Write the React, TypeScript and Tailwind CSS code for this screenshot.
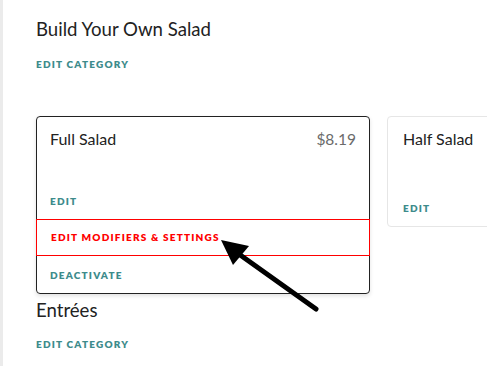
export default function App() {
  const font = { fontFamily: "Lato, 'Noto Sans', sans-serif" };
  return (
    <div className="relative flex h-[366px] w-[487px] overflow-hidden bg-white" style={font}>
      {/* left gutter */}
      <div className="h-full w-[3px] shrink-0 bg-[#ebebeb]" />

      <div className="flex flex-1 flex-col pl-[33px] pt-[17px]">
        <h2 className="text-[18.6px] leading-[24px] text-[#222]">Build Your Own Salad</h2>
        <a className="mt-[17px] text-[10px] font-extrabold leading-[12px] tracking-[1.2px] text-[#3d8b8b]">
          EDIT CATEGORY
        </a>

        <div className="mt-[46px] flex items-start gap-[17px]">
          {/* Full salad */}
          <div className="flex h-[178px] w-[334px] shrink-0 flex-col rounded-[4px] border border-[#222] shadow-[0_2px_4px_rgba(0,0,0,0.12)]">
            <div className="flex h-[65px] items-start justify-between px-[13px] pt-[12px]">
              <span className="text-[16px] leading-[20px] text-[#222]">Full Salad</span>
              <span className="text-[15.5px] leading-[20px] text-[#6b6b6b]">$8.19</span>
            </div>
            <div className="flex h-[37px] items-center px-[13px] pt-[2px]">
              <span className="text-[10px] font-extrabold tracking-[1.2px] text-[#3d8b8b]">EDIT</span>
            </div>
            <div className="-mx-px flex h-[37px] items-center border border-[#f00] px-[14px]">
              <span className="text-[10px] font-extrabold tracking-[1.2px] text-[#f00]">
                EDIT MODIFIERS &amp; SETTINGS
              </span>
            </div>
            <div className="flex flex-1 items-center px-[13px] pt-[2px]">
              <span className="text-[10px] font-extrabold tracking-[1.2px] text-[#3d8b8b]">DEACTIVATE</span>
            </div>
          </div>

          {/* Half salad */}
          <div className="flex h-[111px] w-[140px] shrink-0 flex-col rounded-[4px] border border-[#e6e6e6]">
            <div className="flex h-[73px] items-start px-[15px] pt-[12px]">
              <span className="text-[16px] leading-[20px] text-[#222]">Half Salad</span>
            </div>
            <div className="flex flex-1 items-center px-[15px]">
              <span className="text-[10px] font-extrabold tracking-[1.2px] text-[#3d8b8b]">EDIT</span>
            </div>
          </div>
        </div>

        <h2 className="mt-[4px] text-[18.6px] leading-[24px] text-[#222]">Entrées</h2>
        <a className="mt-[16px] text-[10px] font-extrabold leading-[12px] tracking-[1.2px] text-[#3d8b8b]">
          EDIT CATEGORY
        </a>
      </div>

      {/* pointer arrow */}
      <svg className="absolute left-0 top-0" width="487" height="366" viewBox="0 0 487 366">
        <line x1="316" y1="309" x2="236" y2="252" stroke="#000" strokeWidth="5" strokeLinecap="round" />
        <polygon points="221,240 249,246 233,265" fill="#000" />
      </svg>
    </div>
  );
}
